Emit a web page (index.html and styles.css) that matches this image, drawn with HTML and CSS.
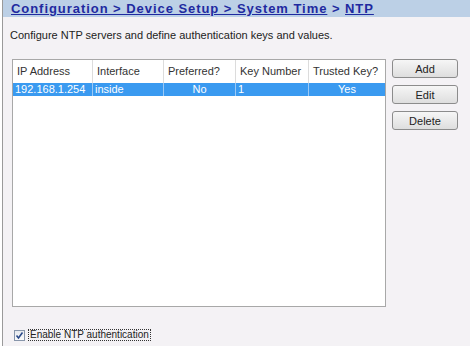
FILE: index.html
```html
<!DOCTYPE html>
<html lang="en">
<head>
    <meta charset="UTF-8">
    <title>NTP</title>
    <link rel="stylesheet" href="styles.css">
</head>
<body>
    <div class="panel">
        <div class="crumb">
            <a href="#">Configuration &gt; Device Setup &gt; System Time</a> &gt; <a href="#">NTP</a>
        </div>
        <div class="intro">Configure NTP servers and define authentication keys and values.</div>
        <div class="main">
            <div class="grid">
                <div class="row head">
                    <div class="cell">IP Address</div>
                    <div class="cell">Interface</div>
                    <div class="cell">Preferred?</div>
                    <div class="cell">Key Number</div>
                    <div class="cell">Trusted Key?</div>
                </div>
                <div class="row sel">
                    <div class="cell">192.168.1.254</div>
                    <div class="cell">inside</div>
                    <div class="cell mid">No</div>
                    <div class="cell">1</div>
                    <div class="cell mid">Yes</div>
                </div>
            </div>
            <div class="actions">
                <button>Add</button>
                <button>Edit</button>
                <button>Delete</button>
            </div>
        </div>
        <label class="check">
            <span class="box">
                <svg width="9" height="9" viewBox="0 0 9 9"><path d="M1.5 4.5 L3.5 7 L7.5 1.5" fill="none" stroke="#2b4a8a" stroke-width="1.6"/></svg>
            </span>
            <span class="text">Enable NTP authentication</span>
        </label>
    </div>
</body>
</html>
```

FILE: styles.css
```css
body {
    margin: 0;
    background: #ffffff;
    font-family: 'Liberation Sans', Arial, sans-serif;
    font-size: 11px;
    color: #222;
}
.panel {
    margin-left: 2px;
    width: 467px;
    height: 346px;
    background: #f4f2f5;
    border-left: 1px solid #9a9a9a;
    display: flex;
    flex-direction: column;
}
.crumb {
    height: 17px;
    line-height: 17px;
    background: #bcd0e6;
    padding-left: 8px;
    font-weight: bold;
    font-size: 13px;
    letter-spacing: 0.95px;
    color: #1f2aa0;
}
.crumb a {
    color: #1f2aa0;
}
.intro {
    margin: 11px 0 0 7px;
    line-height: 14px;
}
.main {
    display: flex;
    margin-top: 17px;
    margin-left: 9px;
}
.grid {
    width: 372px;
    height: 246px;
    background: #fff;
    border: 1px solid #a8a8a8;
}
.row {
    display: grid;
    grid-template-columns: 80px 71px 72px 73px 76px;
}
.head {
    height: 23px;
    line-height: 23px;
    color: #333;
}
.head .cell {
    padding-left: 4px;
    border-right: 1px solid #dcdcdc;
}
.head .cell:last-child {
    border-right: none;
}
.sel {
    height: 13px;
    line-height: 13px;
    background: #3a9af0;
    color: #fff;
}
.sel .cell {
    padding-left: 2px;
    border-right: 1px solid #9cc9f5;
}
.sel .cell:last-child {
    border-right: none;
}
.cell.mid {
    text-align: center;
    padding-left: 0;
}
.actions {
    display: flex;
    flex-direction: column;
    gap: 7px;
    margin-left: 6px;
}
.actions button {
    width: 66px;
    height: 19px;
    padding: 0;
    font-family: inherit;
    font-size: 11px;
    color: #222;
    border: 1px solid #8c8c8c;
    border-radius: 3px;
    background: linear-gradient(#f6f6f6, #dedede);
}
.check {
    display: flex;
    align-items: center;
    margin: 22px 0 0 11px;
}
.box {
    width: 11px;
    height: 11px;
    border: 1px solid #8896ab;
    background: linear-gradient(#e6e9ee, #fafbfc);
    display: flex;
    align-items: center;
    justify-content: center;
    box-sizing: border-box;
}
.text {
    margin-left: 3px;
    border: 1px dotted #333;
    font-size: 10px;
    line-height: 10px;
    padding: 0 1px;
}
```
